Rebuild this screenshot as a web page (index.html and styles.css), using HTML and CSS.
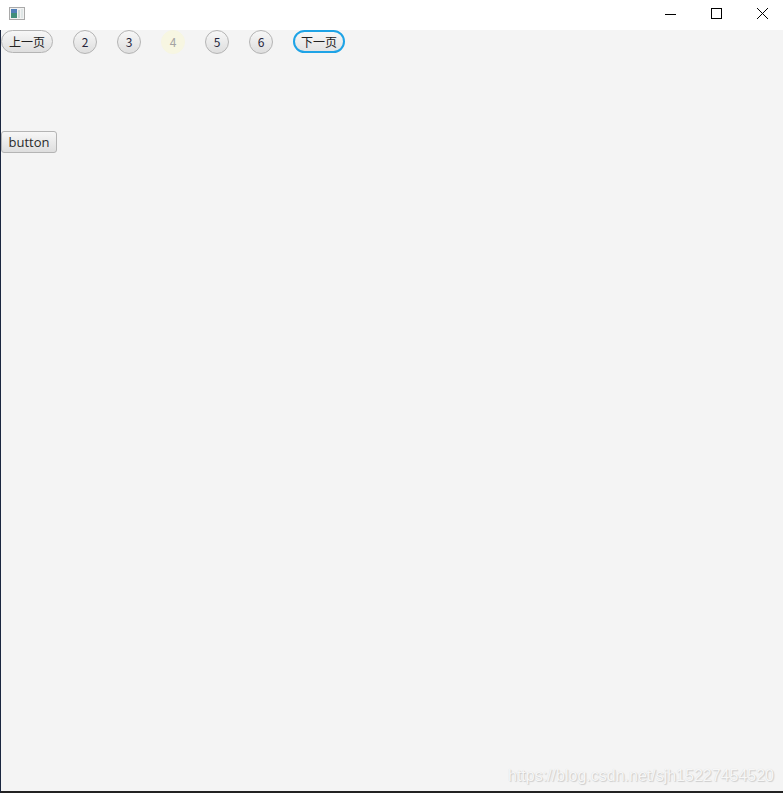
FILE: index.html
```html
<!DOCTYPE html>
<html lang="zh">
<head>
<meta charset="utf-8">
<title>Pagination</title>
<link rel="stylesheet" href="styles.css">
</head>
<body>
<div class="window">
  <div class="titlebar">
    <svg class="app-icon" width="16" height="13" viewBox="0 0 16 13">
      <rect x="0.5" y="0.5" width="15" height="12" fill="#f2f2f2" stroke="#a9a9a9"/>
      <rect x="2" y="2" width="6" height="9" fill="#3f8f7a"/>
      <rect x="2" y="2" width="6" height="4" fill="#4f7fb8"/>
      <rect x="9" y="3" width="2" height="8" fill="#c9d9d6"/>
      <rect x="12" y="2" width="2" height="9" fill="#dfe6e6"/>
    </svg>
    <div class="controls">
      <svg class="ctl" width="46" height="30" viewBox="0 0 46 30"><line x1="20" y1="14.5" x2="31" y2="14.5" stroke="#000" stroke-width="1"/></svg>
      <svg class="ctl" width="46" height="30" viewBox="0 0 46 30"><rect x="20.5" y="8.5" width="10" height="10" fill="none" stroke="#000" stroke-width="1"/></svg>
      <svg class="ctl" width="46" height="30" viewBox="0 0 46 30"><path d="M20 8 L31 19 M31 8 L20 19" stroke="#000" stroke-width="1" fill="none"/></svg>
    </div>
  </div>
  <div class="content">
    <div class="pager">
      <button class="btn pill">上一页</button>
      <button class="btn circle">2</button>
      <button class="btn circle">3</button>
      <button class="btn circle current">4</button>
      <button class="btn circle">5</button>
      <button class="btn circle">6</button>
      <button class="btn pill focused">下一页</button>
    </div>
    <button class="btn plain">button</button>
    <div class="watermark">https://blog.csdn.net/sjh15227454520</div>
  </div>
</div>
</body>
</html>
```

FILE: styles.css
```css
html, body {
  margin: 0;
  padding: 0;
  width: 783px;
  height: 793px;
  overflow: hidden;
}
.window {
  width: 783px;
  height: 793px;
  display: flex;
  flex-direction: column;
  font-family: "Noto Sans CJK SC", "Noto Sans", sans-serif;
}
.titlebar {
  height: 30px;
  background: #ffffff;
  display: flex;
  align-items: flex-start;
  justify-content: space-between;
  flex: none;
}
.app-icon {
  margin: 7px 0 0 9px;
}
.controls {
  display: flex;
}
.ctl {
  display: block;
}
.content {
  flex: 1;
  position: relative;
  background: #f4f4f4;
  border-left: 1px solid #1a2640;
  border-bottom: 2px solid #222222;
  display: flex;
  flex-direction: column;
  align-items: flex-start;
}
.pager {
  display: flex;
  gap: 20px;
  height: 23px;
  align-items: center;
}
.btn {
  box-sizing: border-box;
  font-family: "Noto Sans CJK SC", "Noto Sans", sans-serif;
  font-size: 12px;
  color: #222222;
  background: linear-gradient(#f7f7f7, #dedede);
  border: 1px solid #b4b4b4;
  padding: 0;
  margin: 0;
  line-height: 1;
  display: flex;
  align-items: center;
  justify-content: center;
}
.pill {
  width: 52px;
  height: 23px;
  border-radius: 12px;
}
.circle {
  width: 24px;
  height: 24px;
  border-radius: 50%;
  color: #24243a;
}
.current {
  background: #f7f6e2;
  border-color: #f7f6e2;
  color: #a4a4a4;
}
.focused {
  border: 2px solid #1ea3e6;
  background: linear-gradient(#f7f7f7, #e3e3e3);
}
.plain {
  margin-top: 78px;
  width: 56px;
  height: 22px;
  border-radius: 3px;
  font-size: 13px;
  font-family: "Open Sans", "Noto Sans", sans-serif;
  color: #2a2a2a;
}
.watermark {
  position: absolute;
  right: 9px;
  bottom: 6px;
  font-family: "Liberation Sans", Arial, sans-serif;
  font-size: 16px;
  color: #f7f7f7;
  text-shadow: 1px 1px 1px rgba(0,0,0,0.15), 0 0 1px rgba(0,0,0,0.12);
}
```
